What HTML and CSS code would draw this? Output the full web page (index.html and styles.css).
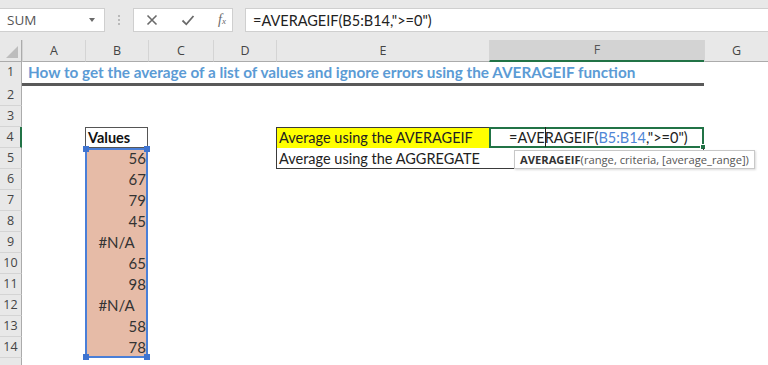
FILE: index.html
```html
<!DOCTYPE html>
<html lang="en">
<head>
    <meta charset="UTF-8">
    <meta name="viewport" content="width=device-width, initial-scale=1.0">
    <title>AVERAGEIF ignoring errors</title>
    <link rel="stylesheet" href="styles.css">
</head>
<body>
    <div class="toolbar">
        <div class="namebox">
            <span>SUM</span>
            <span class="drop"></span>
        </div>
        <div class="grip"><i></i><i></i><i></i></div>
        <div class="fbuttons">
            <svg width="12" height="12" viewBox="0 0 12 12"><path d="M1.5 1.5l9 9M10.5 1.5l-9 9" stroke="#6a6a6a" stroke-width="1.6" fill="none"/></svg>
            <svg width="14" height="12" viewBox="0 0 14 12"><path d="M1.5 6.5l3.8 3.8L12.5 2" stroke="#6a6a6a" stroke-width="1.8" fill="none"/></svg>
            <span class="fx">f<small>x</small></span>
        </div>
        <div class="formula">=AVERAGEIF(B5:B14,"&gt;=0")</div>
    </div>

    <div class="sheet">
        <div class="row head">
            <div class="corner"><svg width="12" height="12" viewBox="0 0 12 12"><path d="M12 0V12H0Z" fill="#bdbdbd"/></svg></div>
            <div class="ch">A</div>
            <div class="ch">B</div>
            <div class="ch">C</div>
            <div class="ch">D</div>
            <div class="ch">E</div>
            <div class="ch active">F</div>
            <div class="ch">G</div>
        </div>

        <div class="row r1">
            <div class="rh">1</div>
            <div class="title">How to get the average of a list of values and ignore errors using the AVERAGEIF function</div>
            <div class="cell"></div>
        </div>

        <div class="row">
            <div class="rh">2</div>
            <div class="cell"></div><div class="cell"></div><div class="cell"></div><div class="cell"></div><div class="cell"></div><div class="cell"></div><div class="cell"></div>
        </div>

        <div class="row">
            <div class="rh">3</div>
            <div class="cell"></div><div class="cell"></div><div class="cell"></div><div class="cell"></div><div class="cell"></div><div class="cell"></div><div class="cell"></div>
        </div>

        <div class="row">
            <div class="rh current">4</div>
            <div class="cell"></div>
            <div class="cell boxed bold">Values</div>
            <div class="cell"></div>
            <div class="cell"></div>
            <div class="cell yellow box-tl">Average using the AVERAGEIF</div>
            <div class="cell editing box-tr">=AVE<span class="cursor"></span>RAGEIF(<span class="ref">B5:B14</span>,"&gt;=0")</div>
            <div class="cell"></div>
        </div>

        <div class="row">
            <div class="rh">5</div>
            <div class="cell"></div>
            <div class="cell num sel sel-top">56</div>
            <div class="cell"></div>
            <div class="cell"></div>
            <div class="cell box-bl">Average using the AGGREGATE</div>
            <div class="cell box-br">
                <div class="tip"><b>AVERAGEIF</b>(range, criteria, [average_range])</div>
            </div>
            <div class="cell"></div>
        </div>

        <div class="row">
            <div class="rh">6</div>
            <div class="cell"></div><div class="cell num sel">67</div><div class="cell"></div><div class="cell"></div><div class="cell"></div><div class="cell"></div><div class="cell"></div>
        </div>
        <div class="row">
            <div class="rh">7</div>
            <div class="cell"></div><div class="cell num sel">79</div><div class="cell"></div><div class="cell"></div><div class="cell"></div><div class="cell"></div><div class="cell"></div>
        </div>
        <div class="row">
            <div class="rh">8</div>
            <div class="cell"></div><div class="cell num sel">45</div><div class="cell"></div><div class="cell"></div><div class="cell"></div><div class="cell"></div><div class="cell"></div>
        </div>
        <div class="row">
            <div class="rh">9</div>
            <div class="cell"></div><div class="cell err sel">#N/A</div><div class="cell"></div><div class="cell"></div><div class="cell"></div><div class="cell"></div><div class="cell"></div>
        </div>
        <div class="row">
            <div class="rh">10</div>
            <div class="cell"></div><div class="cell num sel">65</div><div class="cell"></div><div class="cell"></div><div class="cell"></div><div class="cell"></div><div class="cell"></div>
        </div>
        <div class="row">
            <div class="rh">11</div>
            <div class="cell"></div><div class="cell num sel">98</div><div class="cell"></div><div class="cell"></div><div class="cell"></div><div class="cell"></div><div class="cell"></div>
        </div>
        <div class="row">
            <div class="rh">12</div>
            <div class="cell"></div><div class="cell err sel">#N/A</div><div class="cell"></div><div class="cell"></div><div class="cell"></div><div class="cell"></div><div class="cell"></div>
        </div>
        <div class="row">
            <div class="rh">13</div>
            <div class="cell"></div><div class="cell num sel">58</div><div class="cell"></div><div class="cell"></div><div class="cell"></div><div class="cell"></div><div class="cell"></div>
        </div>
        <div class="row">
            <div class="rh">14</div>
            <div class="cell"></div><div class="cell num sel sel-bottom">78</div><div class="cell"></div><div class="cell"></div><div class="cell"></div><div class="cell"></div><div class="cell"></div>
        </div>
        <div class="row">
            <div class="rh"></div>
            <div class="cell"></div><div class="cell"></div><div class="cell"></div><div class="cell"></div><div class="cell"></div><div class="cell"></div><div class="cell"></div>
        </div>
    </div>
</body>
</html>
```

FILE: styles.css
```css
body {
    margin: 0;
    width: 768px;
    height: 365px;
    overflow: hidden;
    background: #fff;
    font-family: Lato, "Liberation Sans", sans-serif;
}
.toolbar {
    display: flex;
    align-items: center;
    height: 40px;
    padding-bottom: 1px;
    box-sizing: border-box;
    background-color: #e8e8e8;
}
.namebox {
    display: flex;
    align-items: center;
    justify-content: space-between;
    width: 105px;
    height: 24px;
    box-sizing: border-box;
    padding: 0 9px 0 7px;
    background: #fff;
    border: 1px solid #cfcfcf;
    border-left: none;
    font-family: "Open Sans", sans-serif;
    font-size: 13.5px;
    color: #555;
}
.drop {
    width: 0;
    height: 0;
    border-left: 3px solid transparent;
    border-right: 3px solid transparent;
    border-top: 4px solid #6a6a6a;
}
.grip {
    width: 28px;
    display: flex;
    flex-direction: column;
    align-items: center;
    gap: 2px;
}
.grip i {
    width: 2px;
    height: 2px;
    background: #b9b9b9;
}
.fbuttons {
    display: flex;
    align-items: center;
    gap: 23px;
    width: 100px;
    height: 24px;
    box-sizing: border-box;
    padding-left: 12px;
    background: #fff;
    border: 1px solid #cfcfcf;
}
.fx {
    font-family: "Liberation Serif", serif;
    font-style: italic;
    font-size: 14px;
    color: #6a6a6a;
}
.fx small {
    font-size: 9px;
}
.formula {
    flex: 1;
    margin-left: 12px;
    height: 24px;
    box-sizing: border-box;
    padding-left: 7px;
    line-height: 23px;
    background: #fff;
    border: 1px solid #cfcfcf;
    border-right: none;
    font-size: 14.5px;
    color: #222;
}

.row {
    display: grid;
    grid-template-columns: 22px 63px 63px 65px 63px 213px 215px 64px;
    height: 21px;
}
.row.head {
    height: 22px;
}
.row.r1 {
    height: 23px;
}
.corner {
    background: #e8e8e8;
    border-bottom: 1px solid #ababab;
    border-right: 1px solid #ababab;
    display: flex;
    align-items: flex-end;
    justify-content: flex-end;
    padding: 0 3px 3px 0;
    box-sizing: border-box;
}
.ch {
    background: #e8e8e8;
    border-left: 1px solid #d4d4d4;
    border-bottom: 1px solid #ababab;
    text-align: center;
    line-height: 21px;
    font-family: "Open Sans", sans-serif;
    font-size: 12.5px;
    color: #444;
}
.ch.active {
    background: #d3d3d3;
    border-bottom: 2px solid #217346;
    color: #555;
    line-height: 20px;
}
.rh {
    background: #e8e8e8;
    border-bottom: 1px solid #d4d4d4;
    border-right: 1px solid #ababab;
    box-sizing: border-box;
    text-align: center;
    line-height: 20px;
    font-family: "Open Sans", sans-serif;
    font-size: 12.5px;
    color: #444;
}
.rh.current {
    border-right: 2px solid #217346;
}
.cell {
    position: relative;
    font-size: 14.5px;
    line-height: 21px;
    color: #222;
    white-space: nowrap;
    padding: 0 3px;
}
.title {
    grid-column: 2 / 8;
    padding-left: 6px;
    border-bottom: 3px solid #595959;
    font-weight: bold;
    font-size: 15.3px;
    line-height: 21px;
    color: #5b9bd5;
    white-space: nowrap;
}
.bold {
    font-weight: bold;
    color: #111;
}
.boxed {
    box-shadow: inset 0 0 0 1px #555;
}
.num {
    text-align: right;
    padding-right: 2px;
    color: #333;
    font-size: 15px;
}
.err {
    text-align: center;
    color: #333;
    font-size: 15px;
}
.sel {
    background-color: #e6bba7;
    box-shadow: inset 2px 0 #4a7fd8, inset -2px 0 #4a7fd8;
}
.sel-top {
    box-shadow: inset 2px 0 #4a7fd8, inset -2px 0 #4a7fd8, inset 0 2px #4a7fd8;
}
.sel-bottom {
    box-shadow: inset 2px 0 #4a7fd8, inset -2px 0 #4a7fd8, inset 0 -2px #4a7fd8;
}
.sel-top::before,
.sel-top::after,
.sel-bottom::before,
.sel-bottom::after {
    content: "";
    position: absolute;
    width: 6px;
    height: 6px;
    background: #3f74d0;
}
.sel-top::before { left: -2px; top: -2px; }
.sel-top::after { right: -2px; top: -2px; }
.sel-bottom::before { left: -2px; bottom: -2px; }
.sel-bottom::after { right: -2px; bottom: -2px; }

.yellow {
    background-color: #ffff00;
}
.box-tl { box-shadow: inset 1px 1px #3a3a3a; }
.box-tr { box-shadow: inset -1px 1px #3a3a3a; }
.box-bl { box-shadow: inset 1px -1px #3a3a3a; }
.box-br { box-shadow: inset -1px -1px #3a3a3a; }

.editing {
    padding-left: 20px;
    box-shadow: inset 0 0 0 2px #217346;
}
.editing::after {
    content: "";
    position: absolute;
    right: -2px;
    bottom: -2px;
    width: 4px;
    height: 4px;
    background: #217346;
    border: 1px solid #fff;
}
.cursor {
    display: inline-block;
    width: 1px;
    height: 20px;
    margin-right: -1px;
    vertical-align: top;
    background: #222;
}
.ref {
    color: #4f86d6;
}
.tip {
    position: absolute;
    left: 25px;
    top: 2px;
    height: 19px;
    padding: 0 5px;
    box-sizing: border-box;
    background: #fff;
    border: 1px solid #c8c8c8;
    box-shadow: 1px 1px 2px rgba(0, 0, 0, 0.15);
    font-family: "Open Sans", sans-serif;
    font-size: 11.2px;
    line-height: 17px;
    color: #555;
    z-index: 2;
}
.tip b {
    color: #333;
}
```
